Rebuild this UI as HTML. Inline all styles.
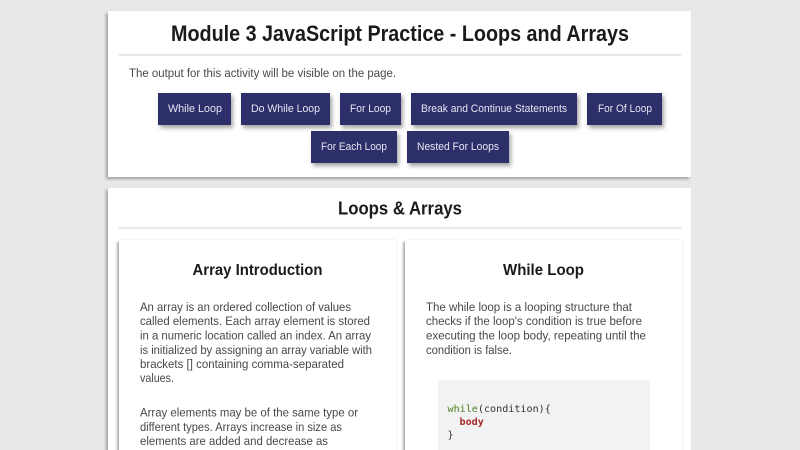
<!DOCTYPE html>
<html lang="en">
<head>
<meta charset="utf-8">
<title>Module 3 JavaScript Practice - Loops and Arrays</title>
<style>
html,body{margin:0;padding:0;width:800px;height:450px;overflow:hidden;background:#e8e8e8}
body{position:relative;font-family:"Liberation Sans",sans-serif}
.card{position:absolute;left:108px;width:583px;background:#fff;box-shadow:-2px 2px 3px #a0a0a0}
.hr{position:absolute;left:119px;width:562px;height:2px;background:#e8e8e8}
.in{position:absolute;top:240px;width:277px;height:230px;background:#fff;box-shadow:-2px 2px 2px #b0b0b0,0 0 2px #e2e2e2}
.btn{position:absolute;height:32px;background:#2d2f6b;box-shadow:2px 3px 4px #a5a5a5}
.code{position:absolute;left:438px;top:380px;width:212px;height:70px;background:#f2f2f2}
svg{position:absolute;left:0;top:0;filter:blur(.3px)}
text{font-family:"Liberation Sans",sans-serif}
.h{font-weight:bold;fill:#1a1a1a}
.p{font-size:12.2px;fill:#484848}
.b{font-size:11.2px;fill:#e6e6f0}
.m{font-family:"DejaVu Sans Mono",monospace;font-size:10.1px;fill:#333}
</style>
</head>
<body>
<div class="card" style="top:11px;height:166px"></div>
<div class="card" style="top:188px;height:280px"></div>
<div class="hr" style="top:54px"></div>
<div class="hr" style="top:227px"></div>
<div class="in" style="left:119px"></div>
<div class="in" style="left:405px"></div>
<div class="btn" style="left:158px;width:73px;top:93px"></div>
<div class="btn" style="left:241px;width:89px;top:93px"></div>
<div class="btn" style="left:340px;width:61px;top:93px"></div>
<div class="btn" style="left:411px;width:166px;top:93px"></div>
<div class="btn" style="left:587px;width:75px;top:93px"></div>
<div class="btn" style="left:310.700px;width:86px;top:131px"></div>
<div class="btn" style="left:406.700px;width:102.300px;top:131px"></div>
<div class="code"></div>
<svg width="800" height="450" viewBox="0 0 800 450">
<text class="h" x="171" y="41" font-size="22" textLength="458" lengthAdjust="spacingAndGlyphs">Module 3 JavaScript Practice - Loops and Arrays</text>
<text class="p" x="129" y="77" textLength="267" lengthAdjust="spacingAndGlyphs">The output for this activity will be visible on the page.</text>
<text class="b" x="168" y="112" textLength="54" lengthAdjust="spacingAndGlyphs">While Loop</text>
<text class="b" x="251" y="112" textLength="69" lengthAdjust="spacingAndGlyphs">Do While Loop</text>
<text class="b" x="350" y="112" textLength="41" lengthAdjust="spacingAndGlyphs">For Loop</text>
<text class="b" x="421" y="112" textLength="146" lengthAdjust="spacingAndGlyphs">Break and Continue Statements</text>
<text class="b" x="598" y="112" textLength="54" lengthAdjust="spacingAndGlyphs">For Of Loop</text>
<text class="b" x="321" y="150" textLength="66" lengthAdjust="spacingAndGlyphs">For Each Loop</text>
<text class="b" x="417" y="150" textLength="82" lengthAdjust="spacingAndGlyphs">Nested For Loops</text>
<text class="h" x="338" y="214.500" font-size="18" textLength="124" lengthAdjust="spacingAndGlyphs">Loops &amp; Arrays</text>
<text class="h" x="192.500" y="275" font-size="15.500" textLength="130" lengthAdjust="spacingAndGlyphs">Array Introduction</text>
<text class="h" x="503" y="275" font-size="15.500" textLength="81" lengthAdjust="spacingAndGlyphs">While Loop</text>
<text class="p" x="140" y="311" textLength="211" lengthAdjust="spacingAndGlyphs">An array is an ordered collection of values</text>
<text class="p" x="140" y="325" textLength="230" lengthAdjust="spacingAndGlyphs">called elements. Each array element is stored</text>
<text class="p" x="140" y="339.500" textLength="231" lengthAdjust="spacingAndGlyphs">in a numeric location called an index. An array</text>
<text class="p" x="140" y="354" textLength="232" lengthAdjust="spacingAndGlyphs">is initialized by assigning an array variable with</text>
<text class="p" x="140" y="368" textLength="204" lengthAdjust="spacingAndGlyphs">brackets [] containing comma-separated</text>
<text class="p" x="140" y="382" textLength="34" lengthAdjust="spacingAndGlyphs">values.</text>
<text class="p" x="140" y="416.500" textLength="218" lengthAdjust="spacingAndGlyphs">Array elements may be of the same type or</text>
<text class="p" x="140" y="431" textLength="202" lengthAdjust="spacingAndGlyphs">different types. Arrays increase in size as</text>
<text class="p" x="140" y="445" textLength="188" lengthAdjust="spacingAndGlyphs">elements are added and decrease as</text>
<text class="p" x="426" y="311" textLength="206" lengthAdjust="spacingAndGlyphs">The while loop is a looping structure that</text>
<text class="p" x="426" y="325" textLength="216" lengthAdjust="spacingAndGlyphs">checks if the loop's condition is true before</text>
<text class="p" x="426" y="339.500" textLength="220" lengthAdjust="spacingAndGlyphs">executing the loop body, repeating until the</text>
<text class="p" x="426" y="354" textLength="86" lengthAdjust="spacingAndGlyphs">condition is false.</text>
<text class="m" x="447.500" y="412"><tspan fill="#4f7f24">while</tspan>(condition){</text>
<text class="m" x="459.500" y="425" font-weight="bold" style="fill:#a52a2a">body</text>
<text class="m" x="447.500" y="438">}</text>
</svg>
</body>
</html>
